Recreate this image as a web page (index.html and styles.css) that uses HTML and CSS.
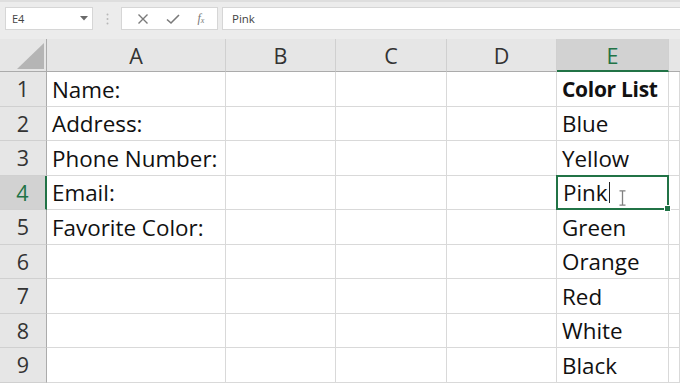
FILE: index.html
```html
<!DOCTYPE html>
<html>
<head>
<meta charset="utf-8">
<link rel="stylesheet" href="styles.css">
</head>
<body>
<div class="toolbar">
  <div class="namebox">
    <span class="nb-text">E4</span>
    <svg class="nb-arrow" width="8" height="5" viewBox="0 0 8 5"><path d="M0 0 L8 0 L4 4.5 Z" fill="#6a6a6a"/></svg>
  </div>
  <div class="grip">
    <svg width="3" height="12" viewBox="0 0 3 12"><circle cx="1.5" cy="1.5" r="1" fill="#b8b8b8"/><circle cx="1.5" cy="6" r="1" fill="#b8b8b8"/><circle cx="1.5" cy="10.5" r="1" fill="#b8b8b8"/></svg>
  </div>
  <div class="fbuttons">
    <svg class="fb-icon" width="12" height="12" viewBox="0 0 12 12"><path d="M1.5 1.5 L10.5 10.5 M10.5 1.5 L1.5 10.5" stroke="#7a7a7a" stroke-width="1.4" fill="none"/></svg>
    <svg class="fb-icon" width="14" height="12" viewBox="0 0 14 12"><path d="M1 6.5 L5 10 L13 2" stroke="#7a7a7a" stroke-width="1.6" fill="none"/></svg>
    <span class="fx">f<sub>x</sub></span>
  </div>
  <div class="formula">Pink</div>
</div>
<div class="sheet">
  <div class="corner"><svg width="27" height="26" viewBox="0 0 27 26"><path d="M27 0 L27 26 L0 26 Z" fill="#b5b5b5"/></svg></div>
  <div class="colhead">A</div>
  <div class="colhead">B</div>
  <div class="colhead">C</div>
  <div class="colhead">D</div>
  <div class="colhead sel">E</div>
  <div class="colhead last"></div>

  <div class="rowhead">1</div><div class="cell">Name:</div><div class="cell"></div><div class="cell"></div><div class="cell"></div><div class="cell bold">Color List</div><div class="cell"></div>
  <div class="rowhead">2</div><div class="cell">Address:</div><div class="cell"></div><div class="cell"></div><div class="cell"></div><div class="cell">Blue</div><div class="cell"></div>
  <div class="rowhead">3</div><div class="cell">Phone Number:</div><div class="cell"></div><div class="cell"></div><div class="cell"></div><div class="cell">Yellow</div><div class="cell"></div>
  <div class="rowhead sel">4</div><div class="cell">Email:</div><div class="cell"></div><div class="cell"></div><div class="cell"></div><div class="cell active">Pink<span class="caret"></span><svg class="ibeam" width="7" height="16" viewBox="0 0 7 16"><path d="M0.5 0.8 L6.5 0.8 M3.5 0.8 L3.5 15.2 M0.5 15.2 L6.5 15.2" stroke="#808080" stroke-width="1.3" fill="none"/></svg><span class="handle"></span></div><div class="cell"></div>
  <div class="rowhead">5</div><div class="cell">Favorite Color:</div><div class="cell"></div><div class="cell"></div><div class="cell"></div><div class="cell">Green</div><div class="cell"></div>
  <div class="rowhead">6</div><div class="cell"></div><div class="cell"></div><div class="cell"></div><div class="cell"></div><div class="cell">Orange</div><div class="cell"></div>
  <div class="rowhead">7</div><div class="cell"></div><div class="cell"></div><div class="cell"></div><div class="cell"></div><div class="cell">Red</div><div class="cell"></div>
  <div class="rowhead">8</div><div class="cell"></div><div class="cell"></div><div class="cell"></div><div class="cell"></div><div class="cell">White</div><div class="cell"></div>
  <div class="rowhead">9</div><div class="cell"></div><div class="cell"></div><div class="cell"></div><div class="cell"></div><div class="cell">Black</div><div class="cell"></div>
</div>
</body>
</html>
```
FILE: styles.css
```css
html, body {
  margin: 0;
  padding: 0;
  width: 680px;
  height: 383px;
  overflow: hidden;
  background: #ffffff;
  font-family: "Open Sans", "Noto Sans", sans-serif;
}

.toolbar {
  height: 39px;
  box-sizing: border-box;
  background: #ececec;
  border-top: 2px solid #dedede;
  padding: 5px 0 0 5px;
  display: flex;
  align-items: flex-start;
}

.namebox {
  width: 88px;
  height: 23px;
  box-sizing: border-box;
  background: #fff;
  border: 1px solid #d6d6d6;
  display: flex;
  align-items: center;
  justify-content: space-between;
  padding: 0 4px 0 6px;
  font-size: 11px;
  color: #444;
}

.grip {
  width: 28px;
  height: 23px;
  display: flex;
  align-items: center;
  justify-content: center;
}

.fbuttons {
  width: 97px;
  height: 23px;
  box-sizing: border-box;
  background: #fff;
  border: 1px solid #d6d6d6;
  display: flex;
  align-items: center;
  justify-content: space-around;
  padding: 0 4px 0 6px;
}

.fx {
  font-family: "Liberation Serif", serif;
  font-style: italic;
  font-size: 12px;
  color: #777;
  line-height: 1;
}
.fx sub {
  font-size: 8px;
  vertical-align: -1px;
}

.formula {
  flex: 1;
  height: 23px;
  box-sizing: border-box;
  margin-left: 4px;
  background: #fff;
  border: 1px solid #d6d6d6;
  border-right: none;
  padding-left: 9px;
  font-size: 11.5px;
  line-height: 21px;
  color: #444;
}

.sheet {
  display: grid;
  grid-template-columns: 47px 179px 110px 111px 110px 112px 1fr;
  grid-template-rows: 33px repeat(9, 34.5px);
}

.corner {
  background: #e6e6e6;
  border-right: 1px solid #ababab;
  border-bottom: 1px solid #ababab;
  box-sizing: border-box;
  display: flex;
  align-items: flex-end;
  justify-content: flex-end;
  padding: 0 2px 2px 0;
}

.colhead {
  background: #e6e6e6;
  border-right: 1px solid #d0d0d0;
  border-bottom: 1px solid #ababab;
  box-sizing: border-box;
  display: flex;
  align-items: center;
  justify-content: center;
  font-size: 21.5px;
  color: #333;
  padding-top: 1px;
}
.colhead.sel {
  background: #d2d2d2;
  color: #217346;
  border-bottom: 2px solid #217346;
  padding-top: 2px;
}
.colhead.last {
  border-right: none;
}

.rowhead {
  background: #e6e6e6;
  border-right: 1px solid #ababab;
  border-bottom: 1px solid #d0d0d0;
  box-sizing: border-box;
  display: flex;
  align-items: center;
  justify-content: center;
  font-size: 21.5px;
  color: #333;
}
.rowhead.sel {
  background: #d2d2d2;
  color: #217346;
  border-right: 2px solid #217346;
}

.cell {
  border-right: 1px solid #d9d9d9;
  border-bottom: 1px solid #d9d9d9;
  box-sizing: border-box;
  display: flex;
  align-items: center;
  padding: 1px 0 0 5px;
  font-size: 22.4px;
  color: #111;
  white-space: nowrap;
  overflow: visible;
}
.cell.bold {
  font-weight: 700;
  font-size: 21px;
  letter-spacing: -0.3px;
}
.cell.active {
  position: relative;
  border: 2px solid #217346;
  margin: -1px 0 0 -1px;
  padding-left: 5px;
}
.caret {
  display: inline-block;
  width: 1.5px;
  height: 21px;
  background: #222;
  margin-left: 1px;
}
.ibeam {
  position: absolute;
  left: 61px;
  top: 13px;
}
.handle {
  position: absolute;
  right: -4px;
  bottom: -4px;
  width: 5px;
  height: 5px;
  background: #217346;
  border: 1px solid #fff;
}
```
